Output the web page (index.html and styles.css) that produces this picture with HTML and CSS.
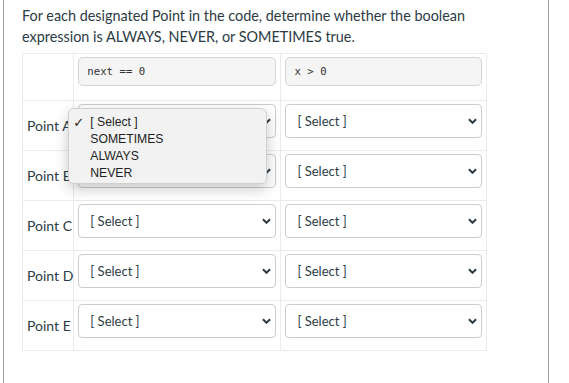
FILE: index.html
```html
<!DOCTYPE html>
<html lang="en">
<head>
    <meta charset="utf-8">
    <meta name="viewport" content="width=device-width, initial-scale=1">
    <title>Question</title>
    <link rel="stylesheet" href="styles.css">
</head>
<body>
    <div class="frame">
        <p class="prompt">For each designated Point in the code, determine whether the boolean expression is ALWAYS, NEVER, or SOMETIMES true.</p>

        <table class="grid">
            <tr class="head">
                <td class="label"></td>
                <td><div class="code">next == 0</div></td>
                <td><div class="code">x &gt; 0</div></td>
            </tr>
            <tr>
                <td class="label">Point A</td>
                <td class="pick">
                    <div class="select covered"><span>[ Select ]</span><svg viewBox="0 0 10 6"><path d="M1 1 L5 5 L9 1"/></svg></div>
                    <ul class="menu">
                        <li class="checked">[ Select ]</li>
                        <li>SOMETIMES</li>
                        <li>ALWAYS</li>
                        <li>NEVER</li>
                    </ul>
                </td>
                <td><div class="select"><span>[ Select ]</span><svg viewBox="0 0 10 6"><path d="M1 1 L5 5 L9 1"/></svg></div></td>
            </tr>
            <tr>
                <td class="label">Point B</td>
                <td><div class="select covered"><span>[ Select ]</span><svg viewBox="0 0 10 6"><path d="M1 1 L5 5 L9 1"/></svg></div></td>
                <td><div class="select"><span>[ Select ]</span><svg viewBox="0 0 10 6"><path d="M1 1 L5 5 L9 1"/></svg></div></td>
            </tr>
            <tr>
                <td class="label">Point C</td>
                <td><div class="select"><span>[ Select ]</span><svg viewBox="0 0 10 6"><path d="M1 1 L5 5 L9 1"/></svg></div></td>
                <td><div class="select"><span>[ Select ]</span><svg viewBox="0 0 10 6"><path d="M1 1 L5 5 L9 1"/></svg></div></td>
            </tr>
            <tr>
                <td class="label">Point D</td>
                <td><div class="select"><span>[ Select ]</span><svg viewBox="0 0 10 6"><path d="M1 1 L5 5 L9 1"/></svg></div></td>
                <td><div class="select"><span>[ Select ]</span><svg viewBox="0 0 10 6"><path d="M1 1 L5 5 L9 1"/></svg></div></td>
            </tr>
            <tr>
                <td class="label">Point E</td>
                <td><div class="select"><span>[ Select ]</span><svg viewBox="0 0 10 6"><path d="M1 1 L5 5 L9 1"/></svg></div></td>
                <td><div class="select"><span>[ Select ]</span><svg viewBox="0 0 10 6"><path d="M1 1 L5 5 L9 1"/></svg></div></td>
            </tr>
        </table>
    </div>
</body>
</html>
```

FILE: styles.css
```css
body {
    margin: 0;
    font-family: Lato, "Noto Sans", sans-serif;
    color: #2d3b45;
    background: white;
}
.frame {
    margin-left: 3px;
    width: 546px;
    min-height: 100vh;
    border-left: 1px solid #a0a0a0;
    border-right: 1px solid #a0a0a0;
    padding: 5px 0 0 18px;
    box-sizing: border-box;
}
.prompt {
    margin: 0 0 6px;
    width: 470px;
    font-size: 14.4px;
    line-height: 21px;
}
.grid {
    border-collapse: collapse;
    width: 465px;
}
.grid td {
    border: 1px solid #ebebeb;
    padding: 3px 4px 12px;
    vertical-align: top;
}
.grid .head td {
    padding: 3px 4px 14px;
}
.grid td.label {
    width: 46px;
    padding: 0 0 0 4px;
    vertical-align: middle;
    font-size: 14px;
    white-space: nowrap;
}
.pick {
    position: relative;
}
.code {
    height: 29px;
    box-sizing: border-box;
    background: #f5f5f5;
    border: 1px solid #d4d4d4;
    border-radius: 5px;
    padding: 0 8px;
    display: flex;
    align-items: center;
    font-family: "DejaVu Sans Mono", monospace;
    font-size: 10.7px;
    color: #333;
}
.select {
    height: 34px;
    box-sizing: border-box;
    border: 1px solid #c7cdd1;
    border-radius: 4px;
    background: white;
    display: flex;
    align-items: center;
    justify-content: space-between;
    padding: 0 4px 0 11px;
    font-size: 13px;
}
.select.covered span {
    visibility: hidden;
}
.select svg {
    width: 9px;
    height: 6px;
    fill: none;
    stroke: #2d3b45;
    stroke-width: 2.2;
}
.menu {
    position: absolute;
    left: -6px;
    top: 7px;
    width: 199px;
    height: 76px;
    box-sizing: border-box;
    margin: 0;
    padding: 5px 0 0 21px;
    list-style: none;
    background: #f2f2f2;
    border: 1px solid #d0d0d0;
    border-radius: 6px;
    box-shadow: 0 5px 14px rgba(0, 0, 0, 0.22);
    font-family: "Liberation Sans", Arial, sans-serif;
    font-size: 12.2px;
    line-height: 17px;
    color: #1e1e1e;
}
.menu li {
    position: relative;
}
.menu li.checked::before {
    content: "\2713";
    position: absolute;
    left: -17px;
    font-family: "DejaVu Sans", sans-serif;
    font-size: 13px;
}
```
